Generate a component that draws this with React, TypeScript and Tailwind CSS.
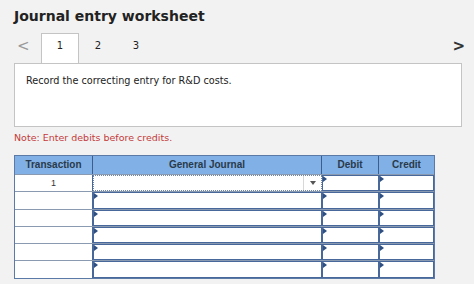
const rows = [1, 2, 3, 4, 5, 6];

const Flag = () => (
  <span className="absolute left-0 top-0 w-0 h-0 border-t-[3px] border-b-[3px] border-l-[4px] border-t-transparent border-b-transparent border-l-[#2f4f80]" />
);

const InputCell = () => (
  <div className="relative h-full border border-[#48679a] bg-white">
    <Flag />
  </div>
);

const App = () => {
  return (
    <main className="w-[474px] h-[284px] bg-[#f2f2f2] pl-[14px] pt-[6px] font-['DejaVu_Sans',sans-serif] text-[#222] overflow-hidden">
      <h1 className="font-bold text-[14px] leading-[20px] text-[#222]">Journal entry worksheet</h1>
      <div className="mt-[7px] flex items-end h-[30px] pr-[9px]">
        <span className="w-[27px] text-[#9a9a9a] text-[15px] leading-[26px] self-start pl-[3px]">&lt;</span>
        <div className="flex text-[10px] text-[#222]">
          <div className="w-[38px] h-[30px] flex items-center justify-center pb-[6px] bg-white border border-b-0 border-[#c4c4c4] -mb-px relative z-10">1</div>
          <div className="w-[38px] h-[30px] flex items-center justify-center pb-[6px]">2</div>
          <div className="w-[38px] h-[30px] flex items-center justify-center pb-[6px]">3</div>
        </div>
        <span className="ml-auto self-start text-[#333] text-[15px] leading-[26px] font-bold">&gt;</span>
      </div>
      <div className="w-[448px] h-[64px] bg-white border border-[#c4c4c4] px-[11px] pt-[10px] text-[9.7px]">
        Record the correcting entry for R&amp;D costs.
      </div>
      <p className="mt-[4px] text-[9.5px] text-[#c43a3a] leading-[14px]">Note: Enter debits before credits.</p>
      <div className="mt-[10px] w-[421px] border border-[#5b7ba6] font-['Liberation_Sans',sans-serif]">
        <div className="grid grid-cols-[78px_229px_57px_55px] h-[18px] bg-[#80b0e6] text-[10px] font-bold text-[#2a3a4a] leading-[18px] text-center">
          <div className="border-r border-[#3d5d8c]">Transaction</div>
          <div className="border-r border-[#3d5d8c]">General Journal</div>
          <div className="border-r border-[#3d5d8c]">Debit</div>
          <div>Credit</div>
        </div>
        {rows.map((r) => (
          <div key={r} className="grid grid-cols-[78px_229px_57px_55px] h-[17.3px] border-t border-[#8a9ab0]">
            <div className="bg-white border-r border-[#48679a] text-[9px] text-center leading-[16px] text-[#333]">
              {r === 1 ? "1" : ""}
            </div>
            {r === 1 ? (
              <div className="relative bg-white border border-dotted border-[#6f86a8] flex justify-end">
                <div className="w-[18px] h-full border-l border-[#d8d8d8] flex items-center justify-center">
                  <span className="w-0 h-0 border-l-[3.5px] border-r-[3.5px] border-t-[4px] border-l-transparent border-r-transparent border-t-[#555]" />
                </div>
              </div>
            ) : (
              <InputCell />
            )}
            <InputCell />
            <InputCell />
          </div>
        ))}
      </div>
    </main>
  );
};

export default App;
